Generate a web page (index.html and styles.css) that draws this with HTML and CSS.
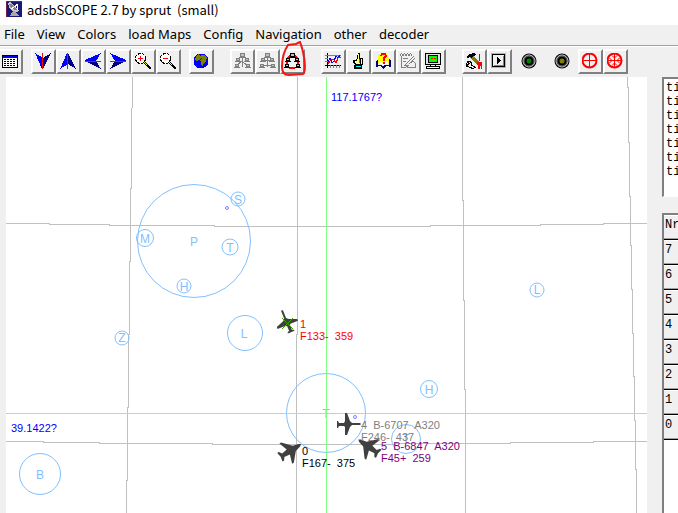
FILE: index.html
```html
<!DOCTYPE html>
<html lang="en">
<head>
    <meta charset="UTF-8">
    <meta name="viewport" content="width=device-width, initial-scale=1.0">
    <title>adsbSCOPE 2.7 by sprut (small)</title>
    <link rel="stylesheet" href="styles.css">
</head>
<body>
    <header class="titlebar">
        <svg class="app-icon" viewBox="0 0 16 16" shape-rendering="crispEdges">
            <rect width="16" height="16" fill="#181878"/>
            <path d="M0 0h16v1H0zM0 0h1v16H0z" fill="#702050"/>
            <path d="M2 2L4 1L13 9L12 11L8 11L4 8Z" fill="#c8c8c8"/>
            <path d="M3 3L5 3L11 9L9 9L5 7Z" fill="#808080"/>
            <path d="M7 10L10 11L13 15H4Z" fill="#a8a8a8"/>
            <path d="M5 8L11 4M11 4L11 9" stroke="#fff" fill="none"/>
            <rect x="10" y="3" width="2" height="2" fill="#fff"/>
        </svg>
        <h1 class="title">adsbSCOPE 2.7 by sprut&nbsp; (small)</h1>
    </header>

    <nav class="menu">
        <button>File</button>
        <button>View</button>
        <button>Colors</button>
        <button>load Maps</button>
        <button>Config</button>
        <button>Navigation</button>
        <button>other</button>
        <button>decoder</button>
    </nav>

    <div class="toolbar">
        <div class="group">
            <button class="tool" aria-label="Table">
                <svg viewBox="0 0 17 17" shape-rendering="crispEdges">
                    <rect y="2" width="16" height="13" fill="#000"/>
                    <rect x="1" y="3" width="14" height="2" fill="#0000ff"/>
                    <rect x="1" y="5" width="14" height="9" fill="#fff"/>
                    <path d="M2 6.5h12M2 8.5h12M2 10.5h12M2 12.5h12" stroke="#000" stroke-dasharray="2 1" fill="none"/>
                </svg>
            </button>
        </div>
        <div class="group">
            <button class="tool" aria-label="Move down">
                <svg viewBox="0 0 17 17" shape-rendering="crispEdges">
                    <path d="M0 0L8 5V16H7Z" fill="#0000ff"/>
                    <path d="M16 0L8 5V16Z" fill="#000080"/>
                    <path d="M7.5 0V16" stroke="#ff0000"/>
                </svg>
            </button>
            <button class="tool" aria-label="Move up">
                <svg viewBox="0 0 17 17" shape-rendering="crispEdges">
                    <path d="M0 16L8 11V0H7Z" fill="#0000ff"/>
                    <path d="M16 16L8 11V0Z" fill="#000080"/>
                    <path d="M7.5 0V16" stroke="#ff0000"/>
                </svg>
            </button>
            <button class="tool" aria-label="Move left">
                <svg viewBox="0 0 17 17" shape-rendering="crispEdges">
                    <path d="M16 0L11 8H0V7Z" fill="#0000ff"/>
                    <path d="M16 16L11 8H0Z" fill="#000080"/>
                    <path d="M0 8.5H16" stroke="#ff0000"/>
                </svg>
            </button>
            <button class="tool" aria-label="Move right">
                <svg viewBox="0 0 17 17" shape-rendering="crispEdges">
                    <path d="M0 0L5 8H16V7Z" fill="#0000ff"/>
                    <path d="M0 16L5 8H16Z" fill="#000080"/>
                    <path d="M0 8.5H16" stroke="#ff0000"/>
                </svg>
            </button>
            <button class="tool" aria-label="Zoom in">
                <svg viewBox="0 0 17 17" shape-rendering="crispEdges">
                    <path d="M9 9L16 16" stroke="#000" stroke-width="2"/>
                    <path d="M9 9L12 12" stroke="#ffff00"/>
                    <circle cx="5.5" cy="5.5" r="5" fill="#fff" stroke="#000" stroke-dasharray="3 1"/>
                    <path d="M3 5.5h5M5.5 3v5" stroke="#ff0000"/>
                </svg>
            </button>
            <button class="tool" aria-label="Zoom out">
                <svg viewBox="0 0 17 17" shape-rendering="crispEdges">
                    <path d="M9 9L16 16" stroke="#000" stroke-width="2"/>
                    <path d="M9 9L12 12" stroke="#ffff00"/>
                    <circle cx="5.5" cy="5.5" r="5" fill="#fff" stroke="#000" stroke-dasharray="3 1"/>
                    <path d="M3 5.5h5" stroke="#ff0000"/>
                </svg>
            </button>
        </div>
        <div class="group">
            <button class="tool" aria-label="World">
                <svg viewBox="0 0 17 17" shape-rendering="crispEdges">
                    <circle cx="8" cy="8" r="7.5" fill="#0000ff"/>
                    <path d="M13 3A7.5 7.5 0 0 1 3 14L9 15L14 12L15 7Z" fill="#000080"/>
                    <path d="M3 3L6 1L7 3L9 4L7 7L5 7L4 9L2 7ZM8 2L12 2L14 5L13 8L11 10L10 13L8 12V9L7 8L9 5Z" fill="#808000"/>
                </svg>
            </button>
        </div>
        <div class="group wide">
            <button class="tool" aria-label="Network" disabled>
                <svg class="dim" viewBox="0 0 17 17" shape-rendering="crispEdges">
                    <use href="#net"/>
                    <path d="M8.5 4V14M4 11.5L8 8L12 11.5"/>
                </svg>
            </button>
            <button class="tool" aria-label="Network server" disabled>
                <svg class="dim" viewBox="0 0 17 17" shape-rendering="crispEdges">
                    <use href="#net"/>
                    <path d="M8.5 4V14M5 7.5H12M5 12.5H12"/>
                </svg>
            </button>
            <div class="marked">
                <button class="tool" aria-label="Network client">
                    <svg viewBox="0 0 17 17" shape-rendering="crispEdges">
                        <path d="M6 3L3 6V12M11 3L14 6V12M5 15H11" stroke="#ff0000" stroke-width="2" fill="none"/>
                        <g id="net">
                            <path d="M6.5 0.5h4v3h-4zM2.5 5.5h3v2h-3zM11.5 5.5h3v2h-3zM1.5 11.5h3v2h-3zM12.5 11.5h3v2h-3z" fill="#c0c0c0" stroke="currentColor"/>
                            <path d="M5 4.5h7M1 8.5h6M10 8.5h6M0 14.5h6M11 14.5h6" stroke="currentColor"/>
                        </g>
                    </svg>
                </button>
                <svg class="marker" viewBox="0 0 28 36">
                    <path d="M21 1L17 3L9 4C5 10 3 19 3 26C3 31 5 34 10 34L24 33C27 31 26 19 24 11C23 6 22 4 21 1Z"/>
                </svg>
            </div>
        </div>
        <div class="group wide">
            <button class="tool" aria-label="Chart">
                <svg viewBox="0 0 17 17" shape-rendering="crispEdges">
                    <path d="M2.5 0V15M0 12.5H16" stroke="#000"/>
                    <path d="M0 2.5H16M0 5.5H3M0 8.5H3M5.5 15V12M8.5 15V12M11.5 15V12M14.5 15V12" stroke="#808080"/>
                    <path d="M3 9L5 5L7 10L9 8L11 3L13 5L15 2" stroke="#0000ff" fill="none"/>
                    <path d="M3 11L5 8L7 6L9 7L11 10L13 5L16 4" stroke="#ff0000" fill="none"/>
                </svg>
            </button>
            <button class="tool" aria-label="Pointer">
                <svg viewBox="0 0 17 17" shape-rendering="crispEdges">
                    <path d="M8 0h2v5h3v7h-8l-2-2V7h2L7 5Z" fill="#000"/>
                    <path d="M8 1h1v5h1v5H6L5 9V8h2V6h1zM11 6h1v5h-1z" fill="#ffff80"/>
                    <path d="M9.5 6v4" stroke="#808000"/>
                    <path d="M4 12h8v4H4z" fill="#000"/>
                    <path d="M6 13.5h5" stroke="#00ffff"/>
                </svg>
            </button>
            <button class="tool" aria-label="Help">
                <svg viewBox="0 0 17 17" shape-rendering="crispEdges">
                    <path d="M3 2L8 0L13 2L14 6L15 10H2L3 6Z" fill="#ffff00"/>
                    <path d="M3 6L1 8V14H6L8 16L10 14H16V8L14 6V12H10L8 13L6 12H3Z" fill="#000080"/>
                    <path d="M4 7L8 10L13 7V11H10L8 12L6 11H4Z" fill="#fff"/>
                    <path d="M3 13h3M11 13h3" stroke="#fff"/>
                    <path d="M6 3L7 1H10L11 3L8.5 6V8M8 10H10" stroke="#ff0000" stroke-width="2" fill="none"/>
                </svg>
            </button>
            <button class="tool" aria-label="Notes" disabled>
                <svg class="dim" viewBox="0 0 17 17" shape-rendering="crispEdges">
                    <path d="M0 2.5L1.5 0L3 2.5L4.5 0L6 2.5L7.5 0L9 2.5L10.5 0L12 2.5M1.5 3V14.5H6M14 3L7 10M15 5L9 11M7 10L5 12H9M9 11C12 7 15 9 15.5 11V14.5H8L5.5 12"/>
                    <path d="M3 5.5H8M3 8.5H6"/>
                </svg>
            </button>
            <button class="tool" aria-label="Monitor">
                <svg viewBox="0 0 17 17" shape-rendering="crispEdges">
                    <rect x="0.5" y="0.5" width="15" height="11" fill="#e0e0e0" stroke="#000"/>
                    <rect x="3" y="2" width="10" height="8" fill="#000"/>
                    <rect x="4" y="3" width="8" height="6" fill="#00ff00"/>
                    <path d="M6 5.5h5" stroke="#ff0000" stroke-dasharray="2 1"/>
                    <path d="M5.5 12v2M10.5 12v2" stroke="#000"/>
                    <rect x="1.5" y="13.5" width="13" height="2" fill="#fff" stroke="#000"/>
                </svg>
            </button>
        </div>
        <div class="group wide">
            <button class="tool" aria-label="Tools">
                <svg viewBox="0 0 17 17" shape-rendering="crispEdges">
                    <path d="M5 3L15 13" stroke="#808000" stroke-width="3"/>
                    <path d="M0 4L3 1L9 0L10 2L7 3L6 6L4 4L1 5Z" fill="#000"/>
                    <path d="M13.5 1V8" stroke="#404040"/>
                    <path d="M11 9h5v7h-1v-3h-1v3h-2v-4h-1z" fill="#ff0000"/>
                    <path d="M1 8.5H4L5.5 10V12L10 15M1 8.5L3 10.5L1.5 12L0 10.5V13L3 14L8 16" stroke="#000" fill="none"/>
                </svg>
            </button>
            <button class="tool" aria-label="Play">
                <svg viewBox="0 0 17 17" shape-rendering="crispEdges">
                    <rect width="15" height="15" fill="#00ffff"/>
                    <rect x="1" y="1" width="13" height="13" fill="#000"/>
                    <rect x="2" y="2" width="11" height="11" fill="#f0f0f0"/>
                    <path d="M12.5 3V12.5H3" stroke="#808080" fill="none"/>
                    <path d="M6 4L10 7.5L6 11Z" fill="#000"/>
                </svg>
            </button>
        </div>
        <div class="lamps">
            <svg class="lamp green" viewBox="0 0 16 16"><use href="#lamp"/></svg>
            <svg class="lamp olive" viewBox="0 0 16 16">
                <g id="lamp">
                    <circle cx="8" cy="8" r="7.5" fill="#000"/>
                    <circle cx="8" cy="8" r="6" fill="none" stroke="#e0e0e0"/>
                    <circle cx="8" cy="8" r="5" fill="#000" stroke="#707070"/>
                    <circle cx="8" cy="8" r="2.5" fill="currentColor"/>
                </g>
            </svg>
        </div>
        <div class="group">
            <button class="tool" aria-label="Centre">
                <svg class="target" viewBox="0 0 17 17">
                    <path d="M7.5 1V14M1 7.5H14"/>
                    <circle cx="7.5" cy="7.5" r="7"/>
                </svg>
            </button>
            <button class="tool" aria-label="Centre on aircraft">
                <svg class="target" viewBox="0 0 17 17">
                    <path d="M7.5 1V14M1 7.5H14M5 2.5L7.5 5L10 2.5M5 12.5L7.5 10L10 12.5M2.5 5L5 7.5L2.5 10M12.5 5L10 7.5L12.5 10"/>
                    <circle cx="7.5" cy="7.5" r="7"/>
                </svg>
            </button>
        </div>
    </div>

    <main class="main">
        <svg class="map" viewBox="6 77 641 436" preserveAspectRatio="xMinYMin slice">
            <defs>
                <!-- aircraft pointing east, centred on 0,0 -->
                <path id="plane" d="M14 0L13 1H5L3 3L0 11H-2L-2 3L-3 2H-8L-9 4H-10V-3H-9L-8 -1H-3L-2 -3V-11H0L3 -3L5 -1H13Z"/>
                <!-- swept-wing jet -->
                <path id="jet" d="M13 0L11 1.500L5 3L-3 12H-5L-2 3L-8 2L-10 5H-12L-11 0L-12 -5H-10L-8 -2L-2 -3L-5 -12H-3L5 -3L11 -1.500Z"/>
            </defs>
            <g class="grid">
                <path d="M132.5 77L131.5 142V188L130.5 189V261L129.5 262V334L128.5 335V407L127.5 408V480L126.5 481V513"/>
                <path d="M297.5 77V334L296.5 335V513"/>
                <path d="M462.5 77V200L463.5 201V300L464.5 301V389L465.5 390V513"/>
                <path d="M627.5 77V87L628.5 88V142L629.5 143V196L630.5 197V245L631.5 246V289L632.5 290V333L633.5 334V376L634.5 377V420L635.5 421V469L636.5 470V513"/>
                <path d="M6 223.5H49L50 224.5H109L110 225.5H214L215 226.5H430L431 225.5H540L541 224.5H603L604 223.5H647"/>
                <path d="M6 441.5H43L44 442.5H99L100 443.5H212L213 444.5H395L396 443.5H510L511 442.5H593L594 441.5H647"/>
            </g>
            <g class="zones">
                <circle cx="194" cy="241" r="56.5"/>
                <circle cx="238" cy="199" r="7"/>
                <circle cx="145" cy="238" r="8.5"/>
                <circle cx="230" cy="247" r="8"/>
                <circle cx="184" cy="286" r="7"/>
                <circle cx="245" cy="333" r="17.5"/>
                <circle cx="122" cy="338" r="7"/>
                <circle cx="40" cy="474" r="20.5"/>
                <circle cx="326" cy="413" r="39.5"/>
                <circle cx="429" cy="389" r="8.5"/>
                <circle cx="406" cy="439" r="14.5"/>
                <circle cx="537" cy="290" r="7"/>
            </g>
            <g class="spots">
                <circle cx="227" cy="208" r="1.5"/>
                <circle cx="355" cy="417" r="1.5"/>
            </g>
            <g class="zone-names">
                <text x="194" y="246">P</text>
                <text x="238" y="204">S</text>
                <text x="145" y="243">M</text>
                <text x="230" y="252">T</text>
                <text x="184" y="291">H</text>
                <text x="244" y="338">L</text>
                <text x="122" y="342">Z</text>
                <text x="40" y="479">B</text>
                <text x="326" y="418">T</text>
                <text x="429" y="394">H</text>
                <text x="406" y="443">T</text>
                <text x="537" y="294">L</text>
            </g>
            <path class="cross" d="M326.5 77V513M6 413.5H647"/>
            <g class="planes">
                <use href="#plane" transform="translate(287 323) rotate(-112)"/>
                <use href="#jet" transform="translate(290 451) rotate(-32)"/>
                <use href="#plane" transform="translate(347 424)"/>
                <use href="#jet" transform="translate(369 447) rotate(215)"/>
                <path class="track" d="M282 318L293 329M293 318L282 329"/>
            </g>
            <g class="labels">
                <text class="pos" x="331" y="101">117.1767?</text>
                <text class="pos" x="11" y="432">39.1422?</text>
                <text class="red" x="300" y="328">1</text>
                <text class="red" x="300" y="340">F133-&nbsp; 359</text>
                <text class="black" x="302" y="455">0</text>
                <text class="black" x="302" y="467">F167-&nbsp; 375</text>
                <text class="gray" x="361" y="429">4&nbsp; B-6707&nbsp; A320</text>
                <text class="gray" x="361" y="441">F246-&nbsp; 437</text>
                <text class="purple" x="381" y="450">5&nbsp; B-6847&nbsp; A320</text>
                <text class="purple" x="381" y="462">F45+&nbsp; 259</text>
            </g>
        </svg>

        <aside class="side">
            <textarea class="log" wrap="off" readonly aria-label="Log">ti
ti
ti
ti
ti
ti
ti</textarea>
            <div class="list">
                <table>
                    <thead>
                        <tr><th>Nr</th></tr>
                    </thead>
                    <tbody>
                        <tr><td>7</td></tr>
                        <tr><td>6</td></tr>
                        <tr><td>5</td></tr>
                        <tr><td>4</td></tr>
                        <tr><td>3</td></tr>
                        <tr><td>2</td></tr>
                        <tr><td>1</td></tr>
                        <tr><td>0</td></tr>
                    </tbody>
                </table>
            </div>
        </aside>
    </main>
</body>
</html>
```

FILE: styles.css
```css
* {
    box-sizing: border-box;
}
body {
    margin: 0;
    height: 100vh;
    display: flex;
    flex-direction: column;
    overflow: hidden;
    background: #f0f0f0;
    color: #000;
    font-family: "Noto Sans", sans-serif;
    font-size: 13px;
}
button {
    font: inherit;
    color: inherit;
    background: none;
    border: none;
    padding: 0;
}
.titlebar {
    display: flex;
    align-items: flex-start;
    gap: 5px;
    height: 25px;
    padding: 1px 6px;
    background: #fff;
}
.app-icon {
    width: 16px;
    height: 16px;
}
.title {
    margin: 0;
    font-family: "Noto Sans CJK SC", "Noto Sans", sans-serif;
    font-size: 13px;
    font-weight: normal;
    line-height: 17px;
}
.menu {
    display: flex;
    gap: 12px;
    height: 21px;
    padding: 0 4px;
    line-height: 18px;
    border-bottom: 1px solid #a0a0a0;
}
.menu button {
    display: block;
    height: 18px;
    white-space: nowrap;
}
.toolbar {
    display: flex;
    gap: 8px;
    height: 31px;
    padding-top: 2px;
    margin-left: -2px;
    border-top: 1px solid #fff;
}
.group {
    display: flex;
}
.group.wide {
    margin-left: 8px;
}
.tool {
    width: 25px;
    height: 25px;
    padding: 1px 2px;
    border: 2px solid;
    border-color: #fff #808080 #808080 #fff;
}
.tool svg {
    display: block;
    width: 17px;
    height: 17px;
}
.dim {
    color: #808080;
    fill: none;
    stroke: #808080;
}
.target {
    fill: none;
    stroke: #ff0000;
}
.target circle {
    stroke-width: 2;
}
.marked {
    position: relative;
}
.marker {
    position: absolute;
    left: -1px;
    top: -8px;
    width: 28px;
    height: 36px;
    fill: none;
    stroke: #f01818;
    stroke-width: 2;
    pointer-events: none;
}
.lamps {
    display: flex;
    gap: 17px;
    padding: 4px 0 0 1px;
}
.lamp {
    width: 16px;
    height: 16px;
}
.green {
    color: #008000;
}
.olive {
    color: #808000;
}
.main {
    flex: 1;
    min-height: 0;
    display: flex;
    padding-left: 6px;
}
.map {
    flex: 1;
    min-width: 0;
    height: 100%;
    background: #fff;
    font-family: "Liberation Sans", Arial, sans-serif;
    font-size: 11px;
}
.grid {
    fill: none;
    stroke: #c0c0c0;
    shape-rendering: crispEdges;
}
.zones {
    fill: none;
    stroke: #80c0ff;
}
.spots {
    fill: none;
    stroke: #8080ff;
}
.zone-names {
    fill: #80c0ff;
    font-size: 12px;
    text-anchor: middle;
}
.cross {
    fill: none;
    stroke: #80ff80;
    shape-rendering: crispEdges;
}
.planes {
    fill: #404040;
}
.track {
    stroke: #40a000;
}
.pos {
    fill: #0000ff;
}
.red {
    fill: #ff0000;
}
.black {
    fill: #000;
}
.gray {
    fill: #808080;
}
.purple {
    fill: #800080;
}
.side {
    width: 16px;
    margin-left: 15px;
    display: flex;
    flex-direction: column;
    gap: 16px;
    overflow: hidden;
    font-family: "Liberation Mono", "Courier New", monospace;
    font-size: 12px;
}
.log {
    display: block;
    width: 100%;
    height: 120px;
    margin: 0;
    padding: 2px;
    border: 2px solid #808080;
    border-right: none;
    border-bottom: 1px solid #fff;
    border-radius: 0;
    background: #fff;
    font-family: inherit;
    font-size: 12px;
    line-height: 14px;
    resize: none;
    overflow: hidden;
}
.list {
    flex: 1;
    border: 2px solid #808080;
    border-right: none;
    border-bottom: none;
    background: #fff;
}
table {
    width: 100%;
    border-collapse: separate;
    border-spacing: 0;
}
th, td {
    height: 25px;
    padding: 0 0 4px 1px;
    font-size: 12px;
    font-weight: normal;
    text-align: left;
    line-height: 17px;
    background: #f0f0f0;
    border-top: 1px solid #fff;
    border-bottom: 1px solid #000;
    box-shadow: inset 0 -1px 0 #a0a0a0;
}
```
